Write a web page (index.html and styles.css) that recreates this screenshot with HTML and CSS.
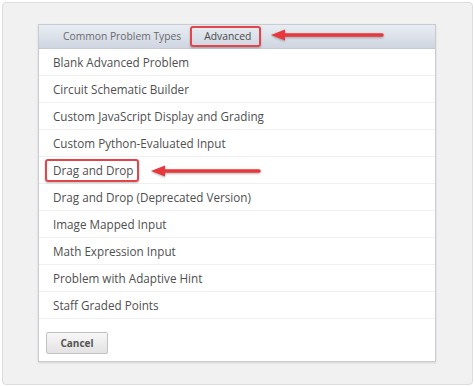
FILE: index.html
```html
<!DOCTYPE html>
<html>
<head>
<meta charset="utf-8">
<link rel="stylesheet" href="styles.css">
</head>
<body>
<div class="outer">
  <div class="panel">
    <div class="tabs">
      <span class="tab">Common Problem Types</span>
      <span class="tab tab-active">Advanced</span>
    </div>
    <ul class="list">
      <li>Blank Advanced Problem</li>
      <li>Circuit Schematic Builder</li>
      <li>Custom JavaScript Display and Grading</li>
      <li>Custom Python-Evaluated Input</li>
      <li>Drag and Drop</li>
      <li>Drag and Drop (Deprecated Version)</li>
      <li>Image Mapped Input</li>
      <li>Math Expression Input</li>
      <li>Problem with Adaptive Hint</li>
      <li>Staff Graded Points</li>
    </ul>
    <div class="footer">
      <button class="cancel">Cancel</button>
    </div>
  </div>
</div>
<div class="hl hl-tab"></div>
<div class="hl hl-dnd"></div>
<svg class="arrow arrow-tab" width="120" height="14" viewBox="0 0 120 14">
  <path d="M12 7 L112 7" stroke="#e8383d" stroke-width="3.5" stroke-linecap="round"/>
  <path d="M1 7 L15 1.5 L15 12.5 Z" fill="#e8383d"/>
</svg>
<svg class="arrow arrow-dnd" width="116" height="14" viewBox="0 0 116 14">
  <path d="M12 7 L109 7" stroke="#e8383d" stroke-width="3.5" stroke-linecap="round"/>
  <path d="M1 7 L15 1.5 L15 12.5 Z" fill="#e8383d"/>
</svg>
</body>
</html>
```
FILE: styles.css
```css
html, body {
  margin: 0;
  padding: 0;
  background: #fff;
  font-family: "Open Sans", "DejaVu Sans", sans-serif;
}
.outer {
  position: relative;
  margin: 2px 0 0 2px;
  width: 434px;
  height: 360px;
  padding: 21px 0 0 35px;
  background: #f1f1f1;
  border: 1px solid #dcdcdc;
  border-radius: 4px;
}
.panel {
  width: 396px;
  height: 336px;
  background: #fff;
  border: 1px solid #c9ccd1;
  box-shadow: 0 1px 2px rgba(0,0,0,0.12);
  display: flex;
  flex-direction: column;
}
.tabs {
  height: 23px;
  background: linear-gradient(#e9edf3, #cfd6e1);
  border-bottom: 1px solid #c5cbd5;
  display: flex;
  align-items: center;
  padding-left: 24px;
  font-size: 10.3px;
  color: #6a6a6a;
  gap: 23px;
}
.tab {
  line-height: 23px;
}
.tab-active {
  color: #4a4a4a;
}
.list {
  list-style: none;
  margin: 0;
  padding: 0;
}
.list li {
  height: 26px;
  line-height: 26px;
  padding-left: 14px;
  font-size: 11.7px;
  color: #4f4f4f;
  border-bottom: 1px solid #f0f0f0;
}
.footer {
  flex: 1;
  padding: 13px 0 0 7px;
}
.cancel {
  display: block;
  width: 62px;
  height: 22px;
  font-family: "Open Sans", "DejaVu Sans", sans-serif;
  font-weight: bold;
  font-size: 10px;
  color: #555;
  background: linear-gradient(#f7f7f7, #e3e3e3);
  border: 1px solid #c2c2c2;
  border-radius: 2px;
  padding: 0;
}
.hl {
  position: absolute;
  border: 2px solid #e2454a;
  border-radius: 3px;
  box-shadow: 0 1px 2px rgba(0,0,0,0.25);
  box-sizing: border-box;
}
.hl-tab {
  left: 190px;
  top: 26px;
  width: 71px;
  height: 21px;
}
.hl-dnd {
  left: 45px;
  top: 159px;
  width: 94px;
  height: 23px;
}
.arrow {
  position: absolute;
  filter: drop-shadow(0 1px 1px rgba(0,0,0,0.3));
}
.arrow-tab {
  left: 270px;
  top: 28px;
}
.arrow-dnd {
  left: 150px;
  top: 164px;
}
```
